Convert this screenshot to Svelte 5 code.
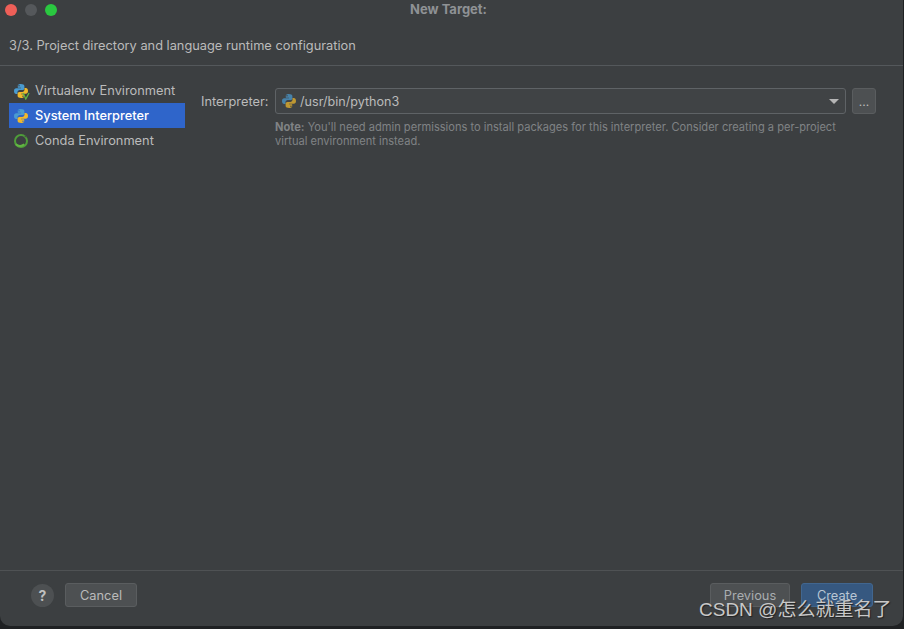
<script>
  const methods = [
    { label: 'Virtualenv Environment', icon: 'venv' },
    { label: 'System Interpreter', icon: 'py', active: true },
    { label: 'Conda Environment', icon: 'conda' }
  ];
</script>

{#snippet python(dim)}
  <svg class="py" class:dim width="16" height="16" viewBox="0 0 16 16">
    <path fill="#4a9bd0" d="M7.8 1C5 1 4.8 2.2 4.8 3v1.7H8v.6H3.2C1.9 5.3 1 6.3 1 8.1s.9 2.9 2.2 2.9h1.3V9.3c0-1.2 1-2.2 2.2-2.2h2.9c1 0 1.8-.8 1.8-1.8V3c0-1.2-1.4-2-3.6-2zM6 2.1a.7.7 0 1 1 0 1.4.7.7 0 0 1 0-1.4z"/>
    <path fill="#f0b92c" d="M8.2 15c2.8 0 3-1.2 3-2v-1.7H8v-.6h4.8c1.3 0 2.2-1 2.2-2.8s-.9-2.9-2.2-2.9h-1.3v1.7c0 1.2-1 2.2-2.2 2.2H6.4c-1 0-1.8.8-1.8 1.8V13c0 1.2 1.4 2 3.6 2zm1.8-1.1a.7.7 0 1 1 0-1.4.7.7 0 0 1 0 1.4z"/>
  </svg>
{/snippet}

<div class="window">
  <header class="titlebar">
    <div class="lights">
      <span class="light red"></span>
      <span class="light grey"></span>
      <span class="light green"></span>
    </div>
    <span class="title">New Target:</span>
  </header>

  <div class="step">3/3. Project directory and language runtime configuration</div>

  <main class="body">
    <ul class="methods">
      {#each methods as m}
        <li class:active={m.active}>
          <span class="icon">
            {#if m.icon === 'conda'}
              <svg width="16" height="16" viewBox="0 0 16 16">
                <circle cx="8" cy="8" r="6" fill="none" stroke="#4f9e3a" stroke-width="2"/>
                <path d="M2.8 11.2a6 6 0 0 0 8.4 0" fill="none" stroke="#62b543" stroke-width="2"/>
                <path d="M11.6 2.8l1.4 1.6" stroke="#3c3f41" stroke-width="1"/>
              </svg>
            {:else}
              {@render python(false)}
              {#if m.icon === 'venv'}
                <svg class="v" width="8" height="8" viewBox="0 0 8 8">
                  <path d="M1 1l2.8 6L7 1" fill="none" stroke="#62b543" stroke-width="1.3"/>
                </svg>
              {/if}
            {/if}
          </span>
          {m.label}
        </li>
      {/each}
    </ul>

    <section class="form">
      <div class="row">
        <span class="label">Interpreter:</span>
        <div class="select">
          {@render python(true)}
          <span class="value">/usr/bin/python3</span>
          <span class="caret"></span>
        </div>
        <button class="dots">...</button>
      </div>
      <p class="note"><b>Note:</b> You'll need admin permissions to install packages for this interpreter. Consider creating a per-project virtual environment instead.</p>
    </section>
  </main>

  <footer class="footer">
    <div class="side">
      <button class="help">?</button>
      <button class="btn cancel">Cancel</button>
    </div>
    <div class="side right">
      <button class="btn previous">Previous</button>
      <button class="btn create">Create</button>
    </div>
    <span class="watermark">CSDN @怎么就重名了</span>
  </footer>
</div>

<style>
  :global(html), :global(body) {
    margin: 0;
    background: #1f2123;
  }
  .window {
    position: relative;
    box-sizing: border-box;
    width: 903px;
    height: 626px;
    background: #3c3f41;
    border-radius: 0 0 10px 10px;
    display: flex;
    flex-direction: column;
    font-family: Inter, "Liberation Sans", "Noto Sans CJK SC", sans-serif;
    color: #bbbbbb;
    overflow: hidden;
  }
  .titlebar {
    position: relative;
    height: 20px;
    display: flex;
    align-items: center;
    justify-content: center;
    flex: none;
  }
  .lights {
    position: absolute;
    left: 5px;
    top: 4px;
    display: flex;
    gap: 8px;
  }
  .light {
    width: 12px;
    height: 12px;
    border-radius: 50%;
  }
  .red { background: #ee5f58; }
  .grey { background: #55585b; }
  .green { background: #2ac840; }
  .title {
    font-size: 13px;
    font-weight: 700;
    color: #8f9295;
    margin-left: -6px;
    margin-top: -2px;
  }
  .step {
    flex: none;
    box-sizing: border-box;
    height: 46px;
    padding: 17px 0 0 9px;
    font-size: 12.8px;
    line-height: 17px;
    color: #bbbbbb;
    border-bottom: 1px solid #54585b;
  }
  .body {
    flex: 1;
    display: flex;
    align-items: flex-start;
    min-height: 0;
  }
  .methods {
    list-style: none;
    margin: 12px 0 0 9px;
    padding: 0;
    width: 176px;
    flex: none;
  }
  .methods li {
    height: 25px;
    display: flex;
    align-items: center;
    font-size: 12.8px;
    color: #bbbbbb;
  }
  .methods li.active {
    background: #2f65ca;
    color: #ffffff;
    font-weight: 500;
  }
  .icon {
    position: relative;
    width: 16px;
    height: 16px;
    margin: 0 6px 0 4px;
    display: flex;
  }
  .v {
    position: absolute;
    right: -1px;
    bottom: -1px;
  }
  .form {
    flex: 1;
    padding: 22px 27px 0 16px;
    min-width: 0;
  }
  .row {
    display: flex;
    align-items: center;
  }
  .label {
    font-size: 12.8px;
    width: 74px;
    flex: none;
  }
  .select {
    flex: 1;
    height: 26px;
    box-sizing: border-box;
    border: 1px solid #5f6366;
    border-radius: 3px;
    background: #404345;
    display: flex;
    align-items: center;
    padding: 0 6px 0 5px;
    gap: 3px;
    font-size: 12.6px;
  }
  .py.dim { opacity: 0.72; flex: none; }
  .value { flex: 1; }
  .caret {
    width: 0;
    height: 0;
    border-left: 5px solid transparent;
    border-right: 5px solid transparent;
    border-top: 5px solid #b5b5b5;
  }
  .dots {
    width: 24px;
    height: 26px;
    margin-left: 6px;
    padding: 0;
    background: #4d5052;
    border: 1px solid #5a5d5f;
    border-radius: 3px;
    color: #bbbbbb;
    font: 12px Inter, "Liberation Sans", sans-serif;
  }
  .note {
    margin: 6px 0 0 74px;
    font-size: 11.1px;
    line-height: 14px;
    color: #808385;
    width: 570px;
  }
  .note b { font-weight: 700; }
  .footer {
    position: relative;
    flex: none;
    box-sizing: border-box;
    height: 56px;
    border-top: 1px solid #4f5254;
    display: flex;
    justify-content: space-between;
    padding: 12px 30px 0 31px;
  }
  .side {
    display: flex;
    align-items: flex-start;
    gap: 11px;
  }
  button { font-family: inherit; }
  .help {
    width: 23px;
    height: 23px;
    padding: 0;
    border-radius: 50%;
    border: none;
    background: #4d5052;
    color: #c0c0c0;
    font-size: 14px;
    font-weight: 700;
    margin-top: 1px;
  }
  .btn {
    height: 24px;
    padding: 0;
    border-radius: 3px;
    font-size: 12.8px;
    background: #4d5052;
    border: 1px solid #5a5d5f;
    color: #bbbbbb;
  }
  .cancel { width: 72px; }
  .previous { width: 80px; color: #a9adb0; }
  .create {
    width: 72px;
    background: #365880;
    border-color: #41668f;
    color: #b9c6d4;
  }
  .watermark {
    position: absolute;
    left: 699px;
    top: 28px;
    font-size: 19px;
    line-height: 22px;
    color: #c8c8c8;
    text-shadow: 1px 1px 1px #222;
    font-family: "Liberation Sans", "Noto Sans CJK SC", sans-serif;
    white-space: nowrap;
  }
</style>
